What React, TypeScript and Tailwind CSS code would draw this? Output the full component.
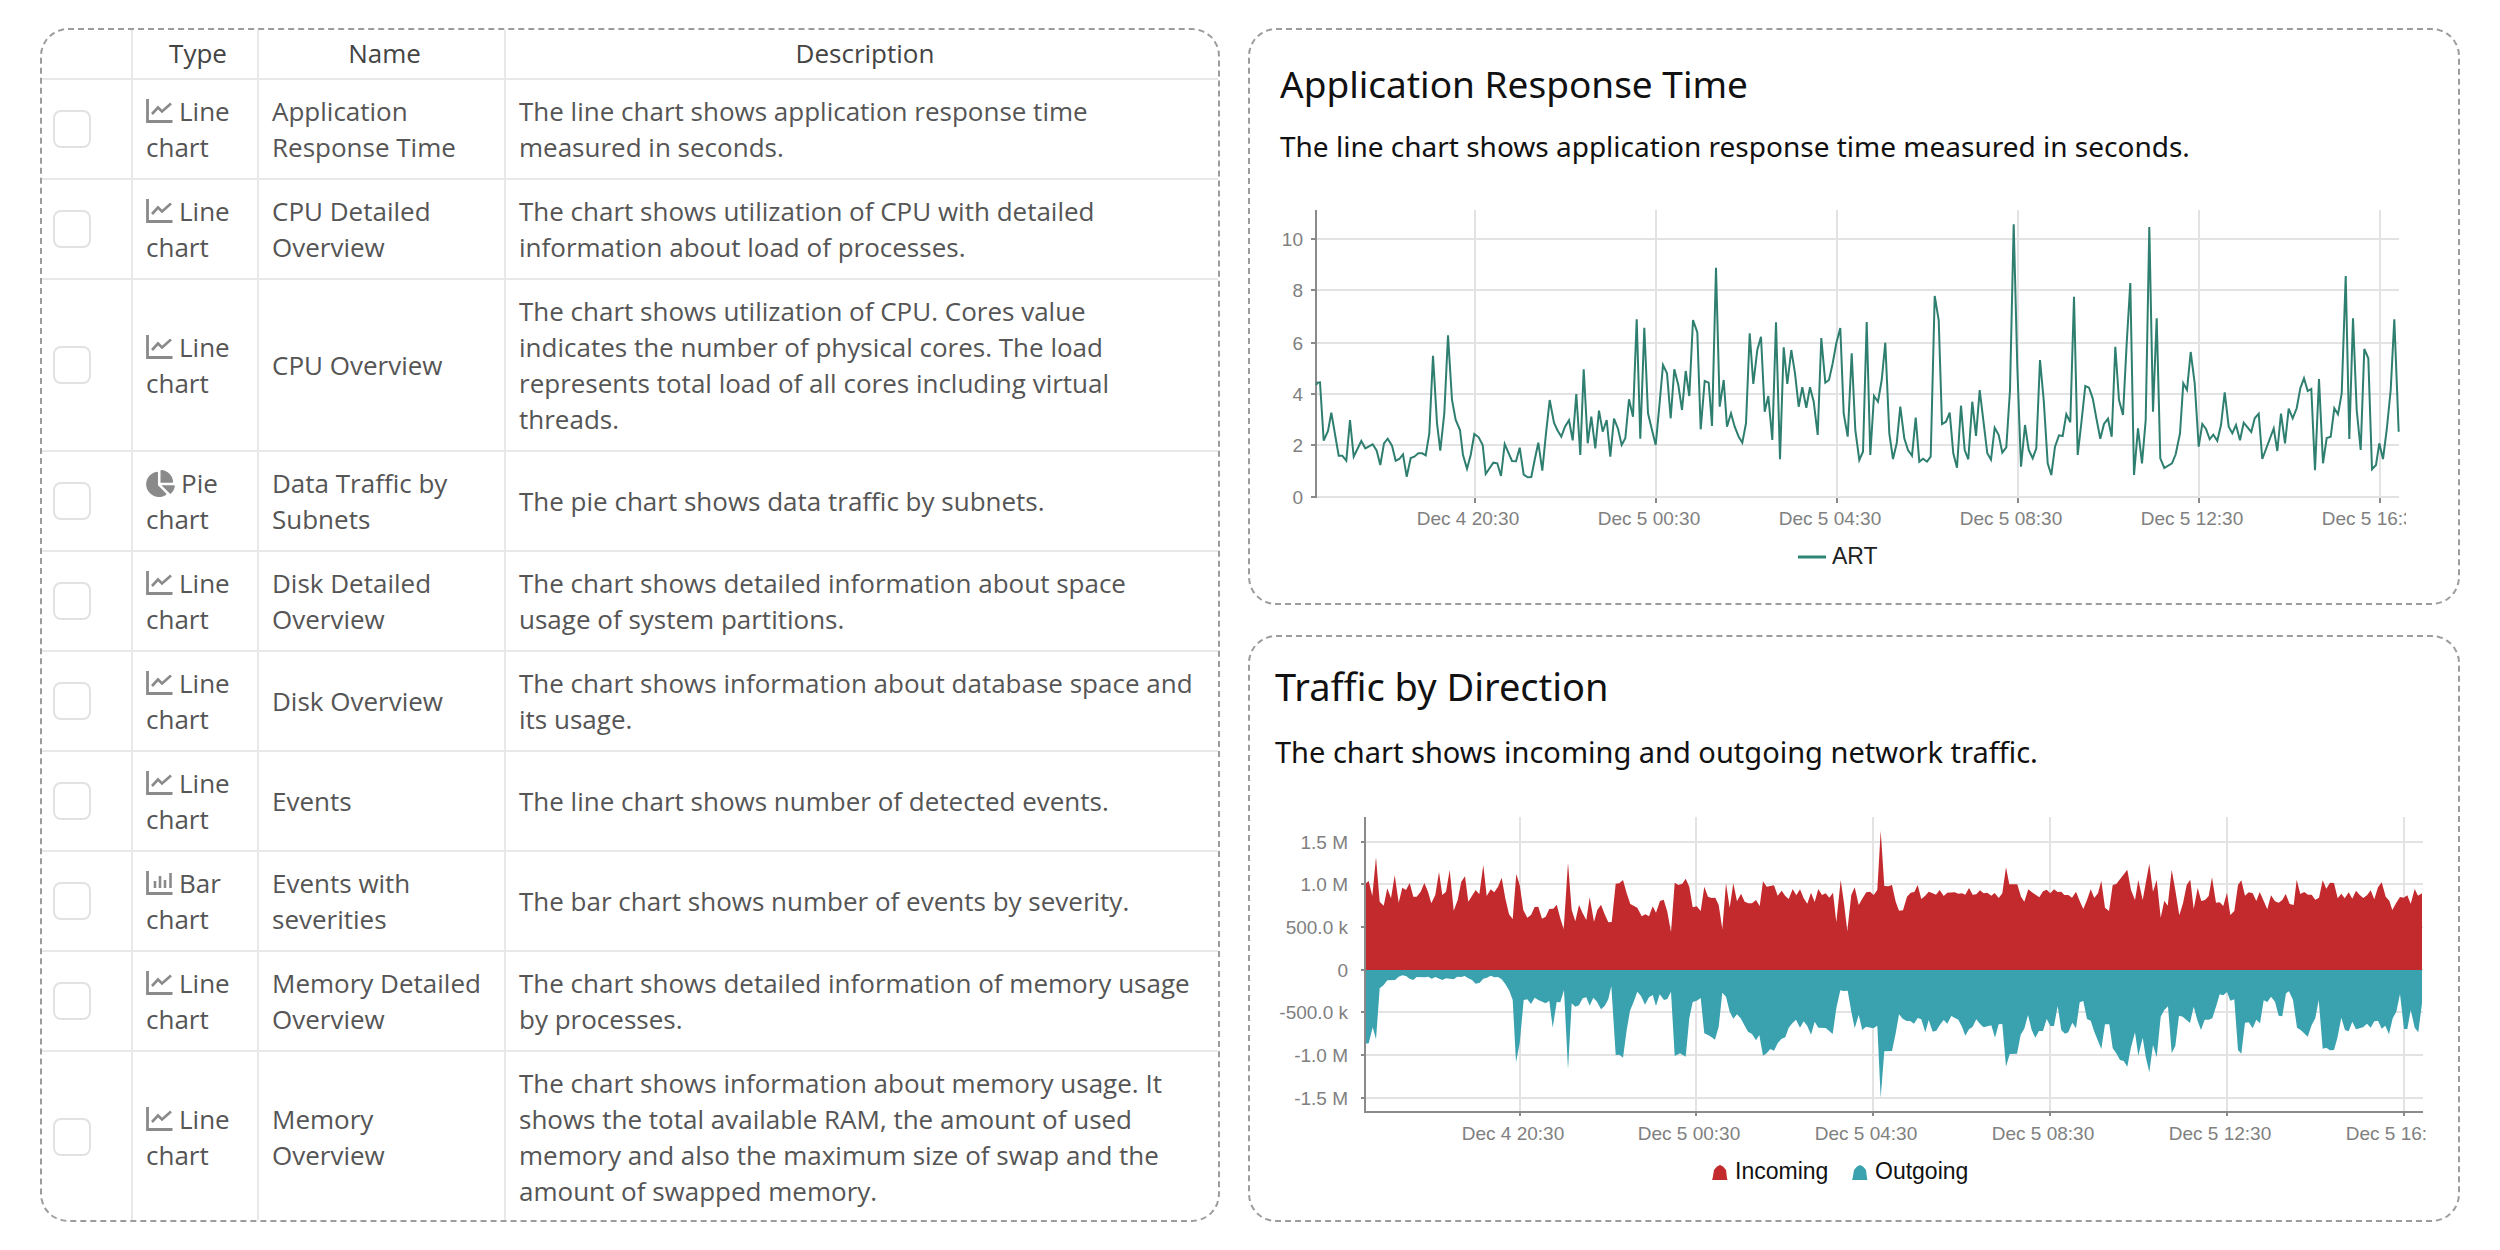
import { useState } from 'react';
import { FaChartPie } from 'react-icons/fa';

type ChartKind = 'Line' | 'Pie' | 'Bar';

interface ChartRow {
  kind: ChartKind;
  name: string;
  description: string;
}

const rows: ChartRow[] = [
  {
    kind: 'Line',
    name: 'Application Response Time',
    description: 'The line chart shows application response time measured in seconds.',
  },
  {
    kind: 'Line',
    name: 'CPU Detailed Overview',
    description:
      'The chart shows utilization of CPU with detailed information about load of processes.',
  },
  {
    kind: 'Line',
    name: 'CPU Overview',
    description:
      'The chart shows utilization of CPU. Cores value indicates the number of physical cores. The load represents total load of all cores including virtual threads.',
  },
  {
    kind: 'Pie',
    name: 'Data Traffic by Subnets',
    description: 'The pie chart shows data traffic by subnets.',
  },
  {
    kind: 'Line',
    name: 'Disk Detailed Overview',
    description:
      'The chart shows detailed information about space usage of system partitions.',
  },
  {
    kind: 'Line',
    name: 'Disk Overview',
    description: 'The chart shows information about database space and its usage.',
  },
  {
    kind: 'Line',
    name: 'Events',
    description: 'The line chart shows number of detected events.',
  },
  {
    kind: 'Bar',
    name: 'Events with severities',
    description: 'The bar chart shows number of events by severity.',
  },
  {
    kind: 'Line',
    name: 'Memory Detailed Overview',
    description: 'The chart shows detailed information of memory usage by processes.',
  },
  {
    kind: 'Line',
    name: 'Memory Overview',
    description:
      'The chart shows information about memory usage. It shows the total available RAM, the amount of used memory and also the maximum size of swap and the amount of swapped memory.',
  },
];

// Samples are "x,y" pairs, three units per chart pixel.
const artSamples = `
139,555 142,548 150,547 161,722 174,693 184,638 206,767 217,767 229,782 240,660 251,770 274,723 286,745
308,733 320,752 331,795 342,730 353,716 366,737 377,782 388,777 399,763 410,830 422,774 433,770 445,760
457,760 467,766 478,700 489,467 501,670 511,752 523,640 534,406 546,600 557,660 570,690 579,765 591,806
602,765 613,702 626,712 638,735 647,822 670,788 682,790 693,828 704,732 726,783 738,784 749,743 761,824
773,832 784,831 795,775 805,728 817,812 828,700 839,600 852,668 862,690 874,710 885,680 897,661 908,721
919,582 931,765 941,508 953,730 964,650 976,745 987,632 998,695 1010,660 1021,770 1032,656 1044,686
1055,735 1066,715 1077,598 1089,650 1100,358 1111,716 1123,383 1134,640 1146,690 1157,735 1168,620
1179,495 1191,520 1202,655 1213,508 1225,555 1236,630 1247,513 1258,588 1269,360 1282,397 1292,688
1304,543 1316,548 1326,678 1338,203 1349,620 1361,540 1371,680 1383,640 1394,680 1406,710 1417,728
1428,670 1439,400 1450,552 1462,450 1473,410 1484,635 1495,588 1507,720 1518,367 1530,778 1541,442
1552,552 1564,450 1575,520 1586,620 1597,562 1609,623 1620,562 1631,605 1643,705 1654,414 1666,548
1677,540 1688,490 1699,430 1711,384 1721,640 1733,710 1745,460 1756,690 1768,780 1779,755 1790,366
1801,765 1812,588 1824,605 1835,540 1846,428 1858,700 1869,777 1880,730 1891,620 1903,715 1914,750
1926,767 1937,653 1948,785 1959,776 1971,785 1982,770 1994,288 2006,360 2016,672 2028,665 2039,638
2050,760 2061,803 2073,617 2084,750 2095,778 2107,605 2118,708 2129,570 2141,670 2152,760 2163,779
2174,683 2186,705 2197,758 2209,742 2220,570 2231,73 2242,500 2253,800 2265,675 2276,750 2288,775
2299,745 2310,480 2321,600 2333,790 2344,825 2355,740 2367,706 2378,708 2389,643 2401,667 2412,290
2423,765 2434,670 2446,558 2457,563 2468,595 2480,660 2491,716 2502,672 2514,656 2525,710 2536,440
2547,600 2559,645 2570,430 2581,249 2592,825 2604,685 2616,790 2627,660 2638,81 2649,635 2660,355
2671,775 2683,804 2706,790 2717,763 2730,700 2740,550 2751,570 2762,456 2774,550 2786,740 2797,672
2808,687 2819,718 2830,704 2842,722 2853,675 2864,577 2876,680 2887,700 2898,675 2910,721 2921,668
2944,696 2954,655 2966,641 2977,777 3011,685 3022,753 3033,641 3045,730 3056,626 3068,655 3080,625
3091,565 3102,535 3113,573 3124,567 3135,811 3147,537 3159,790 3170,714 3182,710 3193,625 3204,643
3215,580 3227,228 3238,717 3249,355 3260,630 3272,750 3283,447 3295,475 3306,808 3318,795 3328,730
3339,777 3350,690 3362,570 3373,358 3386,695`;

const incomingSamples = `
315,252 326,243 337,288 348,172 359,305 371,317 382,265 393,295 404,226 416,308 427,263 438,270 449,249
460,290 470,290 482,275 493,249 504,275 514,310 526,285 537,216 547,285 558,275 569,210 581,332 593,300
604,245 615,229 625,305 647,270 658,283 670,195 680,288 692,268 703,277 714,260 725,233 736,295 747,343
758,357 769,222 779,255 790,330 802,353 813,345 824,321 835,320 846,356 857,350 868,327 880,326 890,314
901,355 911,388 924,188 935,330 946,364 957,315 968,340 979,360 989,292 1002,365 1012,330 1023,314
1034,343 1045,367 1055,366 1067,251 1078,250 1089,240 1100,280 1111,312 1132,323 1145,349 1156,343
1167,349 1178,319 1188,338 1200,303 1211,299 1222,335 1233,396 1244,248 1255,255 1267,251 1277,236
1288,260 1298,322 1310,319 1322,333 1333,260 1344,290 1355,294 1366,293 1376,315 1387,387 1398,250
1409,323 1420,250 1431,304 1443,281 1454,305 1465,310 1476,310 1488,300 1499,318 1509,244 1520,260
1542,256 1553,287 1565,272 1576,288 1586,297 1598,267 1609,286 1620,268 1631,295 1642,311 1653,278
1664,306 1675,267 1686,285 1697,280 1708,293 1719,278 1729,367 1742,240 1752,310 1762,393 1774,285
1784,262 1796,315 1808,294 1819,277 1830,275 1841,285 1852,270 1862,92 1873,258 1885,259 1896,255
1907,305 1917,332 1929,331 1941,290 1952,278 1963,276 1973,255 1984,297 1995,288 2006,275 2018,280
2028,284 2039,270 2051,288 2062,278 2084,277 2095,281 2106,280 2116,284 2127,264 2138,284 2149,283
2160,271 2171,280 2182,278 2194,287 2204,279 2216,294 2227,280 2238,202 2248,253 2272,253 2283,290
2293,305 2305,268 2316,277 2338,292 2349,274 2360,269 2371,280 2382,268 2393,276 2404,275 2413,285
2425,285 2436,293 2448,275 2459,303 2470,327 2481,300 2492,268 2503,294 2514,280 2524,242 2535,323
2547,333 2558,255 2569,252 2602,209 2613,270 2625,300 2635,240 2648,300 2657,250 2668,191 2679,275
2690,240 2702,353 2713,302 2723,317 2735,209 2746,270 2758,346 2769,310 2780,255 2791,239 2801,327
2813,264 2824,303 2835,300 2846,288 2856,232 2868,308 2879,307 2890,318 2901,278 2911,345 2923,333
2934,255 2944,241 2955,287 2966,277 2978,280 2989,303 2999,276 3011,303 3022,328 3033,286 3045,304
3056,308 3067,300 3077,282 3089,312 3101,315 3110,239 3121,282 3133,276 3144,284 3155,284 3166,299
3177,293 3188,241 3199,266 3210,248 3222,249 3233,295 3244,281 3254,295 3266,277 3277,296 3288,272
3299,285 3310,294 3321,286 3332,271 3343,298 3354,262 3365,247 3377,290 3388,302 3397,330 3409,308
3420,291 3431,293 3442,286 3452,311 3464,267 3474,287 3486,280`;

const outgoingSamples = `
315,731 326,730 338,682 348,718 359,565 371,555 382,541 405,540 416,530 427,526 438,528 449,536 460,540
470,531 493,532 505,530 515,536 526,531 547,540 558,535 581,538 592,530 604,531 614,528 625,535 636,540
647,551 659,548 670,536 681,533 692,527 703,532 714,531 725,538 736,552 748,572 758,600 768,787 779,730
791,600 802,598 813,612 824,593 835,600 857,610 868,602 878,683 890,606 901,607 912,570 924,808 935,610
946,620 957,616 968,595 979,592 989,617 1000,593 1011,605 1023,628 1034,618 1045,598 1054,558 1067,765
1078,764 1089,773 1100,690 1110,632 1121,605 1132,575 1143,588 1155,614 1167,592 1178,585 1188,618
1199,583 1212,600 1222,597 1233,575 1244,768 1260,760 1277,770 1288,655 1298,606 1310,602 1322,594
1333,700 1344,705 1355,712 1365,719 1376,680 1387,578 1398,590 1409,635 1420,656 1431,643 1442,655
1453,675 1464,695 1476,702 1488,721 1498,705 1509,767 1520,760 1531,747 1542,752 1553,730 1564,717
1576,712 1586,683 1597,670 1608,659 1620,683 1631,664 1642,678 1653,704 1664,665 1675,683 1697,684
1718,702 1729,625 1741,571 1751,573 1763,572 1774,635 1784,685 1796,645 1807,690 1818,680 1840,685
1852,677 1862,893 1873,754 1896,753 1907,700 1917,643 1928,656 1940,663 1951,663 1962,671 1973,654
1984,658 1996,697 2006,660 2018,695 2029,692 2040,674 2051,660 2062,671 2074,648 2095,659 2106,680
2116,707 2127,688 2138,680 2149,658 2160,672 2171,682 2194,676 2205,713 2216,673 2227,672 2238,800
2249,762 2271,761 2282,704 2293,686 2304,645 2315,690 2326,713 2337,693 2349,693 2360,657 2371,678
2382,678 2393,618 2404,690 2415,701 2425,697 2437,668 2448,685 2459,607 2470,603 2481,657 2492,662
2503,695 2524,747 2535,673 2548,673 2558,745 2569,760 2580,780 2591,783 2602,800 2613,742 2625,697
2635,767 2648,713 2657,770 2668,817 2679,735 2690,772 2702,650 2713,630 2724,619 2735,760 2746,738
2757,647 2768,650 2790,669 2801,620 2812,660 2823,690 2834,659 2846,659 2857,655 2868,620 2879,583
2890,586 2901,576 2911,602 2923,598 2934,750 2944,761 2955,668 2966,667 2978,685 2989,659 3000,670
3011,601 3022,606 3033,590 3045,605 3056,647 3067,649 3078,580 3087,574 3099,600 3111,683 3122,690
3143,710 3155,675 3166,655 3176,600 3188,746 3199,743 3210,751 3222,750 3232,715 3244,653 3255,690
3266,694 3277,665 3288,688 3309,682 3321,671 3332,683 3343,664 3354,662 3365,686 3376,677 3387,703
3398,655 3409,635 3420,582 3432,687 3442,687 3452,630 3464,683 3475,697 3486,610`;

const toPoints = (samples: string) =>
  samples
    .trim()
    .split(/\s+/)
    .map((pair) =>
      pair
        .split(',')
        .map((v) => (Number(v) / 3).toFixed(1))
        .join(',')
    )
    .join(' ');

const timeLabels = [
  'Dec 4 20:30',
  'Dec 5 00:30',
  'Dec 5 04:30',
  'Dec 5 08:30',
  'Dec 5 12:30',
  'Dec 5 16:30',
];

const LineIcon = () => (
  <svg viewBox="0 0 27 24" className="inline-block w-[27px] h-6 mr-1.5 align-[-2px]" aria-hidden="true">
    <path d="M1.5 0V22.5H26.5" fill="none" stroke="#8a8a8a" strokeWidth="2.8" />
    <path d="M6 15L12 8.5L16 12.5L25 4.5" fill="none" stroke="#8a8a8a" strokeWidth="2.6" />
  </svg>
);

const BarIcon = () => (
  <svg viewBox="0 0 27 24" className="inline-block w-[27px] h-6 mr-1.5 align-[-2px]" aria-hidden="true">
    <path d="M1.5 0V22.5H26.5" fill="none" stroke="#8a8a8a" strokeWidth="2.8" />
    <path d="M9 17V10M14 17V5M19 17V9M24.5 17V2" fill="none" stroke="#8a8a8a" strokeWidth="2.6" />
  </svg>
);

const PieIcon = () => (
  <FaChartPie className="inline-block w-[29px] h-[27px] mr-1.5 align-[-4px] text-[#8a8a8a]" aria-hidden="true" />
);

const icons = { Line: LineIcon, Bar: BarIcon, Pie: PieIcon };

const ChartTable = () => {
  const [selected, setSelected] = useState<string[]>([]);

  const toggle = (name: string) =>
    setSelected((prev) =>
      prev.includes(name) ? prev.filter((n) => n !== name) : [...prev, name]
    );

  return (
    <section className="overflow-hidden rounded-[28px] border-2 border-dashed border-[#9c9c9c]">
      <table className="w-full table-fixed border-separate border-spacing-0 font-['Open_Sans',sans-serif] text-[26px] leading-9 text-[#555]">
        <colgroup>
          <col className="w-[91px]" />
          <col className="w-[126px]" />
          <col className="w-[247px]" />
          <col />
        </colgroup>
        <thead>
          <tr className="text-[#444] *:border-b-2 *:border-[#e8e8e8] *:pt-[5px] *:pb-[7px] *:pl-1.5 *:font-normal">
            <th className="border-r-2" aria-label="Selected" />
            <th className="border-r-2">Type</th>
            <th className="border-r-2">Name</th>
            <th>Description</th>
          </tr>
        </thead>
        <tbody>
          {rows.map(({ kind, name, description }) => {
            const Icon = icons[kind];
            return (
              <tr
                key={name}
                className="*:border-b-2 *:border-[#e8e8e8] *:py-[13px] last:*:border-b-0 last:*:pb-[11px]"
              >
                <td className="border-r-2 pl-[11px]">
                  <input
                    type="checkbox"
                    aria-label={name}
                    checked={selected.includes(name)}
                    onChange={() => toggle(name)}
                    className="block size-[38px] appearance-none rounded-lg border-2 border-[#e2e2e2] bg-white checked:bg-[#9c9c9c]"
                  />
                </td>
                <td className="border-r-2 pl-[13px]">
                  <Icon />
                  {kind} chart
                </td>
                <td className="border-r-2 pl-[13px] pr-4">{name}</td>
                <td className="pl-[13px] pr-[22px]">{description}</td>
              </tr>
            );
          })}
        </tbody>
      </table>
    </section>
  );
};

const ResponseTimeChart = () => {
  const xTicks = [205, 386, 567, 748, 929, 1110];
  const yTicks = [
    { label: '10', y: 39 },
    { label: '8', y: 90 },
    { label: '6', y: 143 },
    { label: '4', y: 194 },
    { label: '2', y: 245 },
    { label: '0', y: 297 },
  ];

  return (
    <svg
      viewBox="10 0 1126 376"
      className="block w-full h-auto font-['Liberation_Sans',Arial,sans-serif]"
      role="img"
      aria-label="Application response time"
    >
      <g stroke="#e3e3e3" strokeWidth="2">
        {yTicks.map(({ label, y }) => (
          <line key={label} x1="46" x2="1129" y1={y} y2={y} />
        ))}
        {xTicks.map((x) => (
          <line key={x} x1={x} x2={x} y1="10" y2="297" />
        ))}
      </g>
      <g stroke="#8a8a8a" strokeWidth="2">
        <line x1="46" x2="46" y1="10" y2="298" />
        {yTicks.map(({ label, y }) => (
          <line key={label} x1="41" x2="46" y1={y} y2={y} />
        ))}
        {xTicks.map((x) => (
          <line key={x} x1={x} x2={x} y1="298" y2="303" />
        ))}
      </g>
      <polyline points={toPoints(artSamples)} fill="none" stroke="#2f7f70" strokeWidth="2" />
      <g fill="#808080" fontSize="19">
        {yTicks.map(({ label, y }) => (
          <text key={label} x="33" y={y + 7} textAnchor="end">
            {label}
          </text>
        ))}
        {xTicks.map((x, i) => (
          <text key={x} x={x - 7} y="325" textAnchor="middle">
            {timeLabels[i]}
          </text>
        ))}
      </g>
      <line x1="528" x2="556" y1="357" y2="357" stroke="#2f8574" strokeWidth="3" />
      <text x="562" y="364" fontSize="23" fill="#222">
        ART
      </text>
    </svg>
  );
};

const LegendMarker = ({ x, fill }: { x: number; fill: string }) => (
  <path
    transform={`translate(${x} 365)`}
    fill={fill}
    d="M0 15C1 13 1.2 9 2 5L5 1.5L8 0L11 1.5L14 5C14.6 9 14.8 13 15.5 15Z"
  />
);

const TrafficChart = () => {
  const xTicks = [260, 436, 613, 790, 967, 1144];
  const yTicks = [
    { label: '1.5 M', y: 42 },
    { label: '1.0 M', y: 84 },
    { label: '500.0 k', y: 127 },
    { label: '0', y: 170 },
    { label: '-500.0 k', y: 212 },
    { label: '-1.0 M', y: 255 },
    { label: '-1.5 M', y: 298 },
  ];

  return (
    <svg
      viewBox="15 0 1152 400"
      className="block w-full h-auto font-['Liberation_Sans',Arial,sans-serif]"
      role="img"
      aria-label="Traffic by direction"
    >
      <g stroke="#e3e3e3" strokeWidth="2">
        {yTicks.map(({ label, y }) => (
          <line key={label} x1="105" x2="1163" y1={y} y2={y} />
        ))}
        {xTicks.map((x) => (
          <line key={x} x1={x} x2={x} y1="17" y2="311" />
        ))}
      </g>
      <polygon points={`105,170 ${toPoints(incomingSamples)} 1162,170`} fill="#c22a2d" />
      <polygon points={`105,170 ${toPoints(outgoingSamples)} 1162,170`} fill="#3aa1af" />
      <g stroke="#8a8a8a" strokeWidth="2">
        <line x1="105" x2="105" y1="17" y2="313" />
        <line x1="105" x2="1163" y1="312" y2="312" />
        {yTicks.map(({ label, y }) => (
          <line key={label} x1="101" x2="105" y1={y} y2={y} />
        ))}
        {xTicks.map((x) => (
          <line key={x} x1={x} x2={x} y1="312" y2="316" />
        ))}
      </g>
      <g fill="#808080" fontSize="19">
        {yTicks.map(({ label, y }) => (
          <text key={label} x="88" y={y + 7} textAnchor="end">
            {label}
          </text>
        ))}
        {xTicks.map((x, i) => (
          <text key={x} x={x - 7} y="340" textAnchor="middle">
            {timeLabels[i]}
          </text>
        ))}
      </g>
      <LegendMarker x={452} fill="#c22a2d" />
      <LegendMarker x={592} fill="#3aa1af" />
      <g fontSize="23" fill="#111">
        <text x="475" y="379">
          Incoming
        </text>
        <text x="615" y="379">
          Outgoing
        </text>
      </g>
    </svg>
  );
};

const App = () => (
  <main className="grid grid-cols-[1180fr_1212fr] gap-7 bg-white px-10 py-7">
    <ChartTable />
    <div className="flex flex-col gap-[30px] font-['Noto_Sans',sans-serif] text-[#111]">
      <section className="rounded-[28px] border-2 border-dashed border-[#9c9c9c] pt-[30px] pr-[52px] pb-[27px] pl-[30px]">
        <h2 className="text-[37px] leading-[48px]">Application Response Time</h2>
        <p className="mt-[18px] mb-[34px] text-[28px] leading-10">
          The line chart shows application response time measured in seconds.
        </p>
        <ResponseTimeChart />
      </section>
      <section className="flex-1 rounded-[28px] border-2 border-dashed border-[#9c9c9c] pt-[25px] pr-[31px] pl-[25px]">
        <h2 className="text-[38px] leading-[48px]">Traffic by Direction</h2>
        <p className="mt-[22px] mb-7 text-[29px] leading-10">
          The chart shows incoming and outgoing network traffic.
        </p>
        <TrafficChart />
      </section>
    </div>
  </main>
);

export default App;
